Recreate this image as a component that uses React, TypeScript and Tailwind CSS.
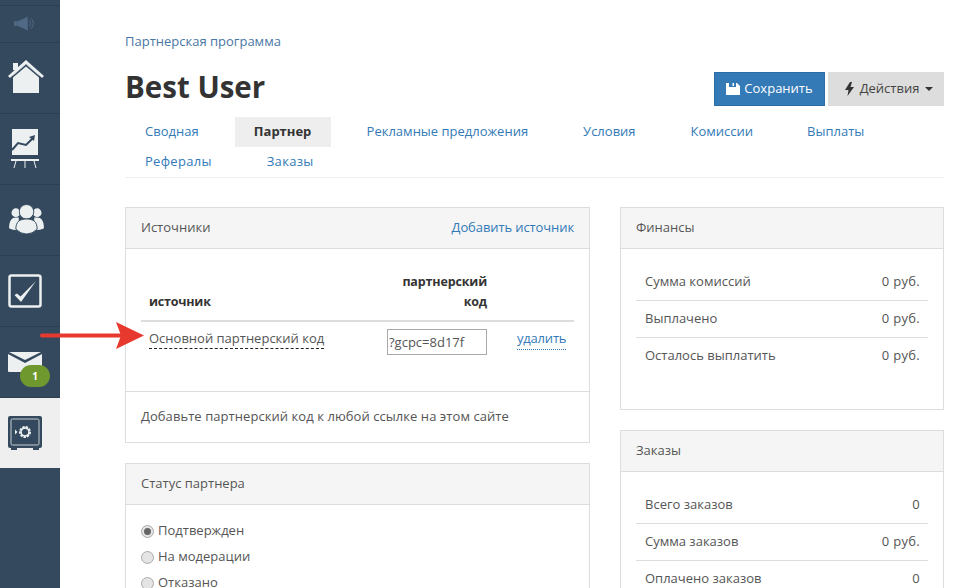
import React from 'react';

const font = 'font-["Open_Sans","Noto_Sans",sans-serif]';

function SideItem({ children, active, h = 'h-[71px]' }: { children: React.ReactNode; active?: boolean; h?: string }) {
  return (
    <div className={`relative flex ${h} items-center justify-center border-b pr-2 ${active ? 'bg-[#efefef] border-[#efefef]' : 'border-[#2c3e50]'}`}>
      {children}
    </div>
  );
}

function Panel({ title, action, children }: { title: string; action?: string; children: React.ReactNode }) {
  return (
    <div className="border border-[#ddd]">
      <div className="flex h-[41px] items-center justify-between border-b border-[#ddd] bg-[#f5f5f5] px-[15px]">
        <span className="text-[#555]">{title}</span>
        {action && <a className="tracking-[-0.1px] text-[#337ab7]">{action}</a>}
      </div>
      {children}
    </div>
  );
}

function StatRow({ label, value, last }: { label: string; value: string; last?: boolean }) {
  return (
    <div className={`flex h-[37px] items-center justify-between border-b pr-2 pl-[9px] text-[#555] ${last ? 'border-transparent' : 'border-[#ddd]'}`}>
      <span>{label}</span>
      <span className="tracking-[0.3px]">{value}</span>
    </div>
  );
}

function Radio({ label, checked }: { label: string; checked?: boolean }) {
  return (
    <div className="flex h-[26px] items-center gap-[4px] text-[#555]">
      <span className="flex h-[13px] w-[13px] items-center justify-center rounded-full border border-[#aaa] bg-[#e4e4e4]">
        {checked && <span className="h-[7px] w-[7px] rounded-full bg-[#666]" />}
      </span>
      {label}
    </div>
  );
}

export default function App() {
  return (
    <div className={`relative flex h-[588px] w-[970px] overflow-hidden bg-white text-[13px] ${font}`}>
      <aside className="w-[60px] shrink-0 bg-[#34495e]">
        <div className="h-[6px] border-b border-[#2c3e50]" />
        <SideItem h="h-[37px]">
          <svg width="22" height="15" viewBox="0 0 24 15" fill="#506a85" className="mr-[2px] -mt-[1px]">
            <rect x="0" y="5" width="4" height="5" />
            <path d="M4 5 L15 0 V15 L4 10 Z" />
            <path d="M17 4 Q19 7.5 17 11 M19 2 Q23 7.5 19 13" fill="none" stroke="#506a85" />
          </svg>
        </SideItem>
        <SideItem>
          <svg width="36" height="35" viewBox="0 0 36 35" className="-mt-[1px]">
            <path d="M5 15 L18 4 L31 15 V33 H5 Z" fill="#ecf0f1" />
            <rect x="5" y="3" width="5" height="7" fill="#ecf0f1" />
            <path d="M1 17 L18 2 L35 17" fill="none" stroke="#ecf0f1" strokeWidth="3" />
            <path d="M1 20 L18 5.5 L35 20" fill="none" stroke="#34495e" strokeWidth="1.5" />
          </svg>
        </SideItem>
        <SideItem>
          <svg width="28" height="39" viewBox="0 0 28 39" className="mr-[2px] -mt-[1px]">
            <rect x="1" y="0" width="26" height="26" fill="#ecf0f1" />
            <path d="M1 21 L7 14 L15 16 L22 9" fill="none" stroke="#34495e" strokeWidth="2" />
            <path d="M24 6 L18 8 L23 12 Z" fill="#34495e" />
            <rect x="0" y="30" width="28" height="2" fill="#ecf0f1" />
            <path d="M5 32 L3 39 M14 32 V39 M23 32 L25 39" stroke="#ecf0f1" strokeWidth="1" />
          </svg>
        </SideItem>
        <SideItem>
          <svg width="35" height="31" viewBox="0 0 36 32" fill="#ecf0f1" className="-mt-[1px]">
            <circle cx="7" cy="9" r="4.5" />
            <circle cx="29" cy="9" r="4.5" />
            <path d="M0 25 C0 17 3 14 7 14 L10 14 V27 Q3 27 0 25Z" />
            <path d="M36 25 C36 17 33 14 29 14 L26 14 V27 Q33 27 36 25Z" />
            <circle cx="18" cy="8" r="7.5" stroke="#34495e" strokeWidth="1" />
            <path d="M7 26 C7 18 11 15.5 18 15.5 C25 15.5 29 18 29 26 Q24 31 18 31 Q12 31 7 26Z" stroke="#34495e" strokeWidth="1" />
          </svg>
        </SideItem>
        <SideItem>
          <svg width="34" height="34" viewBox="0 0 34 34" className="mr-[2px]">
            <rect x="1.5" y="1.5" width="31" height="31" rx="2" fill="none" stroke="#ecf0f1" strokeWidth="2.5" />
            <path d="M6.5 21 L9 19.5 L12.5 22.5 L28 7 L13 28 Z" fill="#ecf0f1" />
          </svg>
        </SideItem>
        <SideItem>
          <svg width="34" height="21" viewBox="0 0 34 21" className="mr-[2px]">
            <path d="M0 2 L17 11 L34 2 V19 Q34 20 33 20 H1 Q0 20 0 19 Z" fill="#ecf0f1" />
            <path d="M1 0 H33 L17 8 Z" fill="#ecf0f1" />
          </svg>
          <span className="absolute left-[20px] top-[38px] flex h-[22px] w-[30px] items-center justify-center rounded-[11px] bg-[#6f982e] text-[10px] font-bold text-white">1</span>
        </SideItem>
        <SideItem active h="h-[70px]">
          <svg width="34" height="34" viewBox="0 0 34 34" className="mr-[2px]">
            <rect x="0" y="0" width="34" height="32" rx="2" fill="#34495e" />
            <rect x="3" y="3" width="28" height="26" rx="1.5" fill="none" stroke="#ecf0f1" strokeWidth="0.8" />
            <rect x="3" y="31" width="6" height="3" fill="#34495e" />
            <rect x="25" y="31" width="6" height="3" fill="#34495e" />
            <circle cx="17" cy="16" r="4.6" fill="none" stroke="#ecf0f1" strokeWidth="2.8" strokeDasharray="2.2 0.9" />
            <circle cx="17" cy="16" r="4" fill="none" stroke="#ecf0f1" strokeWidth="1.4" />
            <path d="M7 13.5 L9.5 16 L7 18.5 Z" fill="#ecf0f1" />
          </svg>
        </SideItem>
      </aside>

      <main className="ml-[65px] w-[819px] shrink-0">
        <a className="mt-[34px] block leading-[15px] text-[#4a77a3]">Партнерская программа</a>
        <div className="mt-[21px] flex items-center justify-between">
          <h1 className="h-[38px] text-[29.5px] leading-[34px] font-bold text-[#333]">Best User</h1>
          <div className="flex gap-[3px]">
            <button className="flex h-[34px] w-[111px] items-center justify-center gap-1 border border-[#2e6da4] bg-[#337ab7] text-white">
              <svg width="14" height="14" viewBox="0 0 14 14" fill="white">
                <path d="M0 1 H11 L14 4 V13 H0 Z M3 1 V5 H10 V1 H8 V4 H6.5 V1 Z" fillRule="evenodd" />
              </svg>
              Сохранить
            </button>
            <button className="flex h-[34px] w-[116px] items-center justify-center gap-[6px] bg-[#ddd] pl-[6px] text-[#444]">
              <svg width="9" height="14" viewBox="0 0 9 14" fill="#333">
                <path d="M5 0 L0 8 H3.5 L2.5 14 L9 5 H5.5 L7 0 Z" />
              </svg>
              Действия
              <span className="h-0 w-0 border-x-[4px] border-t-[4px] border-x-transparent border-t-[#333]" />
            </button>
          </div>
        </div>

        <div className="mt-[9px] border-b border-[#eee]">
          <div className="flex h-[30px] whitespace-nowrap text-[#337ab7] [&>a]:flex [&>a]:items-center [&>a]:px-5">
            <a className="mr-[16px]">Сводная</a>
            <a className="mr-[16px] w-[96px] justify-center bg-[#eee] font-bold text-[#333]">Партнер</a>
            <a className="mr-[15px]">Рекламные предложения</a>
            <a className="mr-[15px]">Условия</a>
            <a className="mr-[14px]">Комиссии</a>
            <a>Выплаты</a>
          </div>
          <div className="flex h-[30px] whitespace-nowrap tracking-[0.3px] text-[#337ab7] [&>a]:flex [&>a]:items-center [&>a]:px-5">
            <a className="mr-[15px]">Рефералы</a>
            <a>Заказы</a>
          </div>
        </div>

        <div className="mt-[29px] flex justify-between">
          <div className="flex w-[465px] flex-col gap-[20px]">
            <Panel title="Источники" action="Добавить источник">
              <div className="px-[15px] pt-[15px]">
                <div className="flex h-[58px] items-end border-b-2 border-[#ddd] pb-[8px] text-[12.5px] leading-[20px] font-bold text-[#333]">
                  <span className="ml-2 w-[238px] tracking-[-0.2px]">источник</span>
                  <span className="w-[100px] text-right tracking-[-0.15px]">партнерский<br />код</span>
                </div>
                <div className="flex h-[69px] items-start pt-[7px] text-[#555]">
                  <span className="ml-2 w-[238px]">
                    <span className="border-b border-dashed border-[#222] pb-[1px]">Основной партнерский код</span>
                  </span>
                  <input
                    readOnly
                    value="?gcpc=8d17f"
                    className="h-[26px] w-[100px] border border-[#aaa] px-[1px] text-[13px] text-[#555]"
                  />
                  <a className="ml-[30px] border-b border-dotted border-[#337ab7] tracking-[-0.2px] text-[#337ab7]">удалить</a>
                </div>
              </div>
              <div className="flex h-[51px] items-center border-t border-[#ddd] px-[15px] tracking-[0.06px] text-[#555]">
                Добавьте партнерский код к любой ссылке на этом сайте
              </div>
            </Panel>
            <Panel title="Статус партнера">
              <div className="px-[15px] pt-[13px] pb-4">
                <Radio label="Подтвержден" checked />
                <Radio label="На модерации" />
                <Radio label="Отказано" />
              </div>
            </Panel>
          </div>

          <div className="flex w-[324px] flex-col gap-[20px]">
            <Panel title="Финансы">
              <div className="px-[15px] pt-[15px] pb-[34px]">
                <StatRow label="Сумма комиссий" value="0 руб." />
                <StatRow label="Выплачено" value="0 руб." />
                <StatRow label="Осталось выплатить" value="0 руб." last />
              </div>
            </Panel>
            <Panel title="Заказы">
              <div className="px-[15px] pt-[15px]">
                <StatRow label="Всего заказов" value="0" />
                <StatRow label="Сумма заказов" value="0 руб." />
                <StatRow label="Оплачено заказов" value="0" last />
              </div>
            </Panel>
          </div>
        </div>
      </main>

      <svg className="absolute left-[40px] top-[320px]" width="105" height="32" viewBox="0 0 105 32">
        <path d="M2 15.5 H82" stroke="#e8392f" strokeWidth="4" strokeLinecap="round" />
        <path d="M76 2 L104 15.5 L76 29 L81 15.5 Z" fill="#e8392f" />
      </svg>
    </div>
  );
}
